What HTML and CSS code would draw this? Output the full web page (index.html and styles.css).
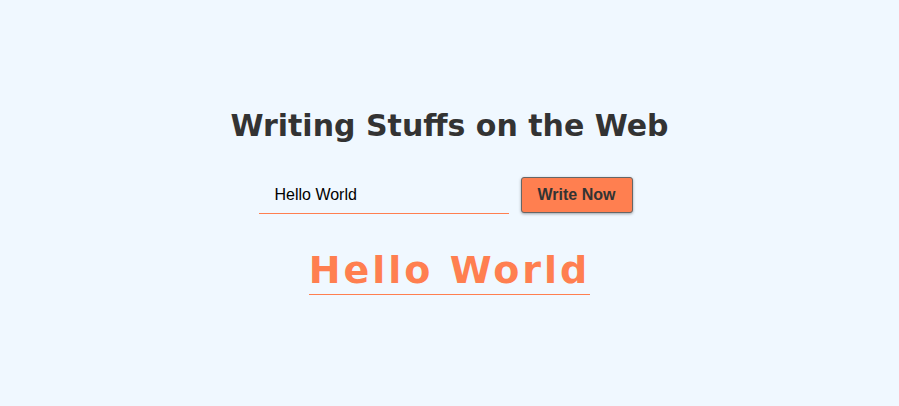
FILE: index.html
```html
<!DOCTYPE html>
<html>
<head>
<meta charset="utf-8">
<link rel="stylesheet" href="styles.css">
</head>
<body>
<main class="app">
  <h1 class="title">Writing Stuffs on the Web</h1>
  <div class="controls">
    <input class="text-input" type="text" value="Hello World">
    <button class="write-btn">Write Now</button>
  </div>
  <div class="output">Hello World</div>
</main>
</body>
</html>
```
FILE: styles.css
```css
html, body {
  margin: 0;
  padding: 0;
  background: #f0f8ff;
}
.app {
  display: flex;
  flex-direction: column;
  align-items: center;
  padding-top: 105px;
}
.title {
  margin: 0;
  font-family: "DejaVu Sans", sans-serif;
  font-weight: bold;
  font-size: 30px;
  line-height: 42px;
  color: #333333;
}
.controls {
  display: flex;
  align-items: center;
  gap: 12px;
  margin-top: 29px;
  padding-right: 8px;
}
.text-input {
  width: 250px;
  height: 38px;
  box-sizing: border-box;
  border: none;
  border-bottom: 1px solid #ff7f50;
  background: transparent;
  padding: 0 16px;
  font-family: "Liberation Sans", Arial, sans-serif;
  font-size: 16px;
  color: #000;
  outline: none;
}
.write-btn {
  width: 112px;
  height: 36px;
  box-sizing: border-box;
  background: #ff7f50;
  border: 1px solid #666;
  border-radius: 3px;
  box-shadow: 0 1px 3px rgba(0,0,0,0.35);
  font-family: "Liberation Sans", Arial, sans-serif;
  font-weight: bold;
  font-size: 16px;
  color: #333;
  padding: 0;
}
.output {
  margin-top: 32px;
  font-family: "DejaVu Sans", sans-serif;
  font-weight: bold;
  font-size: 38px;
  letter-spacing: 3px;
  line-height: 48px;
  color: #ff7f50;
  border-bottom: 1px solid #ff7f50;
}
```
